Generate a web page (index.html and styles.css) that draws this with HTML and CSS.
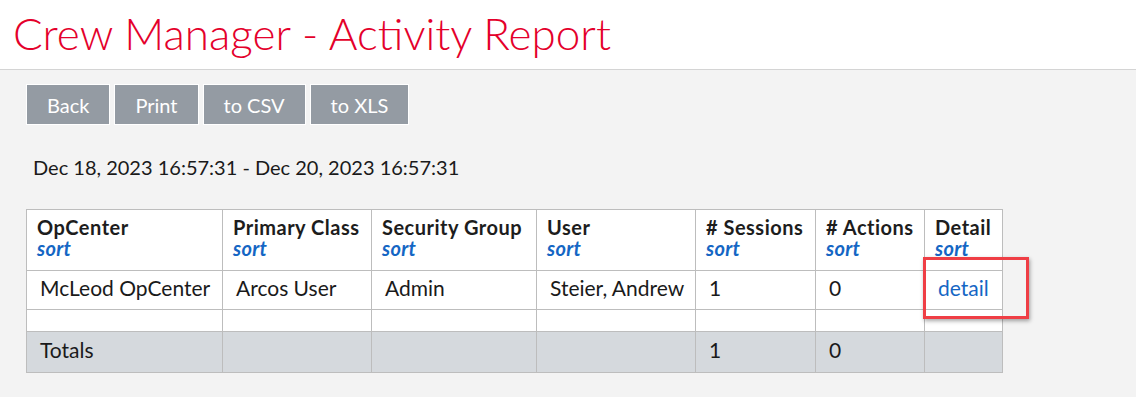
FILE: index.html
```html
<html>
<head>
    <link rel="stylesheet" href="styles.css">
</head>
<body>
<div class="top">
    <h1 class="title">Crew Manager - Activity Report</h1>
</div>

<div class="content">
    <div class="toolbar">
        <button class="btn">Back</button>
        <button class="btn">Print</button>
        <button class="btn">to CSV</button>
        <button class="btn">to XLS</button>
    </div>

    <p class="range">Dec 18, 2023 16:57:31 - Dec 20, 2023 16:57:31</p>

    <div class="report-wrap">
        <table class="report">
            <colgroup>
                <col class="c-op">
                <col class="c-class">
                <col class="c-group">
                <col class="c-user">
                <col class="c-sess">
                <col class="c-act">
                <col class="c-detail">
            </colgroup>
            <tr class="head">
                <th>OpCenter<br/><a class="sort">sort</a></th>
                <th>Primary Class<br/><a class="sort">sort</a></th>
                <th>Security Group<br/><a class="sort">sort</a></th>
                <th>User<br/><a class="sort">sort</a></th>
                <th># Sessions<br/><a class="sort">sort</a></th>
                <th># Actions<br/><a class="sort">sort</a></th>
                <th>Detail<br/><a class="sort">sort</a></th>
            </tr>
            <tr class="row">
                <td>McLeod OpCenter</td>
                <td>Arcos User</td>
                <td>Admin</td>
                <td>Steier, Andrew</td>
                <td>1</td>
                <td>0</td>
                <td><a class="detail">detail</a></td>
            </tr>
            <tr class="spacer">
                <td></td><td></td><td></td><td></td><td></td><td></td><td></td>
            </tr>
            <tr class="totals">
                <td>Totals</td>
                <td></td>
                <td></td>
                <td></td>
                <td>1</td>
                <td>0</td>
                <td></td>
            </tr>
        </table>
        <div class="highlight">&nbsp;</div>
    </div>
</div>
</body>
</html>
```

FILE: styles.css
```css
html, body {
    font-family: "Lato", sans-serif;
    margin: 0;
    height: 100%;
    background: #f3f3f3;
    color: #1a1a1a;
}

.top {
    background: white;
    height: 69px;
    border-bottom: 1px solid #d4d4d4;
}

.title {
    margin: 0;
    padding: 7px 0 0 13px;
    font-size: 44px;
    font-weight: 300;
    color: #e4002b;
    line-height: 52px;
}

.content {
    padding: 14px 0 0 26px;
}

.toolbar {
    display: flex;
    gap: 4px;
}

.btn {
    font-family: inherit;
    font-size: 20px;
    color: white;
    background: #949ba3;
    border: 1px solid white;
    height: 41px;
    padding: 0 20px;
    cursor: pointer;
}

.range {
    margin: 30px 0 0 7px;
    font-size: 20px;
    line-height: 24px;
}

.report-wrap {
    position: relative;
    margin-top: 30px;
    width: 1010px;
}

.report {
    border-collapse: collapse;
    table-layout: fixed;
    width: 977px;
    background: white;
    font-size: 21px;
}

.report th, .report td {
    border: 1px solid #bdbdbd;
    text-align: left;
}

.report th {
    padding: 7px 6px 11px 10px;
    font-size: 20px;
    font-weight: bold;
    letter-spacing: 0.5px;
    line-height: 21px;
    vertical-align: top;
    white-space: nowrap;
    color: #1d1d1d;
}

.sort {
    color: #1466c4;
    font-style: italic;
    font-size: 20px;
    letter-spacing: 0.3px;
}

.report td {
    padding: 0 8px 6px 13px;
    height: 39px;
    vertical-align: middle;
    white-space: nowrap;
}

.spacer td {
    height: 22px;
    padding-bottom: 0;
}

.totals td {
    background: #d5d9dd;
    height: 41px;
}

.c-op { width: 196px; }
.c-class { width: 149px; }
.c-group { width: 165px; }
.c-user { width: 159px; }
.c-sess { width: 120px; }
.c-act { width: 109px; }
.c-detail { width: 78px; }

.detail {
    color: #1466c4;
}

.highlight {
    position: absolute;
    left: 897px;
    top: 48px;
    width: 100px;
    height: 56px;
    border: 3px solid #ef3e45;
    box-shadow: 1px 2px 4px rgba(0, 0, 0, 0.35);
}
```
